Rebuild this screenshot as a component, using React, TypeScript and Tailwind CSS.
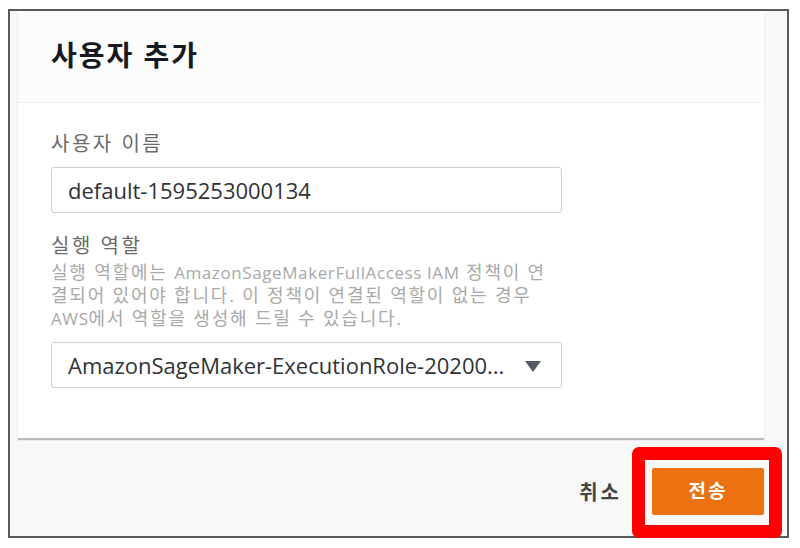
const font = { fontFamily: '"Open Sans", "Noto Sans CJK KR", sans-serif' }

function Label({ children, className = "" }: { children: React.ReactNode; className?: string }) {
  return (
    <label className={`block text-[20px] leading-[26px] tracking-[2.5px] text-[#6b6b6b] ${className}`}>
      {children}
    </label>
  )
}

// Korean runs in the help text sit a little wider than the latin ones
function K({ children }: { children: React.ReactNode }) {
  return <span className="text-[18px] leading-[0] tracking-[1.8px]">{children}</span>
}

function Box({ children, className = "" }: { children: React.ReactNode; className?: string }) {
  return (
    <div
      className={`w-[511px] h-[46px] border border-[#cfcfcf] rounded-[3px] flex items-center pl-[16px] text-[22px] text-[#2f3338] ${className}`}
    >
      {children}
    </div>
  )
}

export default function App() {
  return (
    <div className="w-[800px] h-[548px] bg-white pt-[9px] pl-[8px]" style={font}>
      <div className="w-[781px] h-[529px] border-2 border-[#5a5a5a] bg-[#f8f8f8] flex flex-col">
        {/* card */}
        <div className="ml-[8px] mr-[23px] h-[427px] bg-white shadow-[0_2px_1px_rgba(0,0,0,0.25)] flex flex-col">
          <div className="h-[92px] shrink-0 bg-[#fcfcfc] border-b border-[#eeeeee] flex items-center pl-[33px] pb-[4px]">
            <h2 className="text-[28px] font-bold text-[#16191f] tracking-[2px]">사용자 추가</h2>
          </div>

          <div className="flex flex-col pl-[33px] pt-[28px]">
            <Label>사용자 이름</Label>
            <Box className="mt-[10px]">default-1595253000134</Box>

            <Label className="mt-[20px]">실행 역할</Label>
            <p className="mt-[2px] text-[17px] leading-[23px] tracking-[0.6px] text-[#a9a9a9] whitespace-nowrap">
              <K>실행 역할에는 </K>AmazonSageMakerFullAccess IAM<K> 정책이 연</K>
              <br />
              <K>결되어 있어야 합니다. 이 정책이 연결된 역할이 없는 경우</K>
              <br />
              AWS<K>에서 역할을 생성해 드릴 수 있습니다.</K>
            </p>
            <Box className="mt-[12px] justify-between pr-[20px]">
              <span>AmazonSageMaker-ExecutionRole-20200...</span>
              <span className="w-0 h-0 mt-[2px] border-l-[8px] border-r-[8px] border-t-[11px] border-l-transparent border-r-transparent border-t-[#545b64]" />
            </Box>
          </div>
        </div>

        {/* footer */}
        <div className="flex-1 flex items-end justify-end pr-[5px]">
          <div className="flex items-center gap-[10px] mb-[-2px]">
            <button className="text-[20px] font-bold text-[#444] tracking-[3px]">취소</button>
            <div className="w-[150px] h-[91px] border-[13px] border-[#ff0000] rounded-[7px] flex items-center justify-center">
              <button className="w-[112px] h-[47px] bg-[#ec7211] rounded-[2px] text-[19px] font-bold text-white tracking-[2px] ml-[2px] mt-[-2px]">
                전송
              </button>
            </div>
          </div>
        </div>
      </div>
    </div>
  )
}
